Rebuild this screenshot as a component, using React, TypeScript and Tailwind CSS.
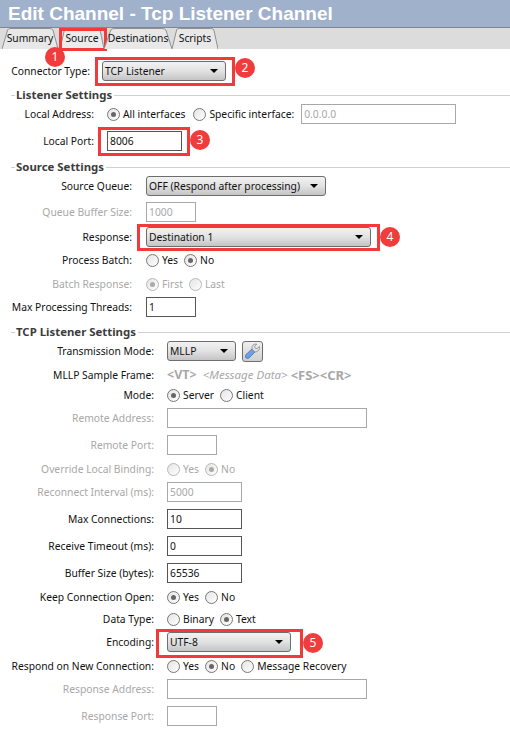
import React from "react";

const redBox = "absolute border-[3px] border-[#f23a3a] pointer-events-none";
const badge =
  "absolute w-5 h-5 rounded-full bg-[#f03c3c] text-white text-[12px] flex items-center justify-center";

// Section heading with the rule running to the right edge
function Heading({ title, className }: { title: string; className: string }) {
  return (
    <div className={`flex items-center h-[14px] ${className}`}>
      <div className="ml-[11px] w-[4px] h-px bg-[#d0d0d0] shrink-0" />
      <span className="font-bold text-[#3c3c3c] text-[11.4px] px-[1px]">{title}</span>
      <div className="flex-1 h-px bg-[#d0d0d0] ml-[1px]" />
    </div>
  );
}

function Row({
  label,
  labelW,
  disabled,
  className,
  children,
}: {
  label: string;
  labelW: string;
  disabled?: boolean;
  className?: string;
  children: React.ReactNode;
}) {
  return (
    <div className={`flex items-center h-5 ${className}`}>
      <div className={`text-right shrink-0 whitespace-nowrap ${labelW} ${disabled ? "text-[#a8a8a8]" : "text-[#111]"}`}>
        {label}
      </div>
      {children}
    </div>
  );
}

function Radio({ label, checked, disabled }: { label: string; checked?: boolean; disabled?: boolean }) {
  return (
    <div className={`flex items-center gap-[3px] mr-[6px] whitespace-nowrap ${disabled ? "text-[#a8a8a8]" : "text-[#111]"}`}>
      <span
        className={`w-[13px] h-[13px] rounded-full border flex items-center justify-center bg-gradient-to-br from-[#e4e4e4] to-white ${
          disabled ? "border-[#b8b8b8]" : "border-[#777]"
        }`}
      >
        {checked && <span className={`w-[5px] h-[5px] rounded-full ${disabled ? "bg-[#aaa]" : "bg-[#666]"}`} />}
      </span>
      {label}
    </div>
  );
}

function Input({ value, width, disabled }: { value?: string; width: string; disabled?: boolean }) {
  return (
    <div
      className={`h-5 border flex items-center px-[2px] ${width} ${
        disabled ? "border-[#a8a8a8] text-[#a8a8a8]" : "border-[#555] text-[#111]"
      }`}
    >
      {value}
    </div>
  );
}

function Select({ value, width }: { value: string; width: string }) {
  return (
    <div
      className={`h-5 border border-[#6e6e6e] rounded-[3px] flex items-center justify-between pl-[2px] pr-[7px] whitespace-nowrap bg-gradient-to-b from-[#f2f2f2] via-[#e2e2e2] to-[#c4c4c4] text-[#111] ${width}`}
    >
      <span>{value}</span>
      <span className="w-0 h-0 border-l-[4px] border-r-[4px] border-t-[4px] border-l-transparent border-r-transparent border-t-black" />
    </div>
  );
}

function Tab({ label, width, active }: { label: string; width: string; active?: boolean }) {
  return (
    <div className={`relative h-[21px] flex items-center justify-center text-[#111] ${width}`}>
      <svg className="absolute inset-0 w-full h-full" viewBox="0 0 50 21" preserveAspectRatio="none">
        <path
          d="M0 21 L5 2 Q5.500 0.500 8 0.500 L42 0.500 Q45 0.500 45.500 2 L50 21"
          fill={active ? "#ececec" : "#e8e8e8"}
          stroke="#8f8f8f"
          strokeWidth="1"
          vectorEffect="non-scaling-stroke"
        />
      </svg>
      <span className="relative">{label}</span>
    </div>
  );
}

export default function App() {
  return (
    <div className="w-[510px] h-[742px] overflow-hidden bg-white text-[10.3px] leading-none font-['Noto_Sans','Liberation_Sans',sans-serif]">
      {/* Title */}
      <div className="h-[28px] bg-[#9fb1cb] border-b border-[#7f8791] pl-[8px] flex items-center text-white font-bold text-[19px] font-['Liberation_Sans',sans-serif]">
        Edit Channel - Tcp Listener Channel
      </div>

      {/* Tabs */}
      <div className="h-[21px] bg-[#dcdcdc] flex items-end pl-[2px]">
        <Tab label="Summary" width="w-[56px]" />
        <div className="relative ml-[2px]">
          <Tab label="Source" width="w-[44px]" active />
          <div className={`${redBox} -left-[1px] -right-[3px] top-0 h-[23px]`} />
          <div className={`${badge} -left-[15px] top-[19px]`}>1</div>
        </div>
        <Tab label="Destinations" width="w-[68px]" />
        <Tab label="Scripts" width="w-[46px]" />
      </div>

      {/* Connector */}
      <Row label="Connector Type:" labelW="w-[90px]" className="mt-[12px]">
        <div className="relative ml-[12px]">
          <Select value="TCP Listener" width="w-[124px]" />
          <div className={`${redBox} -left-[7px] -right-[9px] -top-[4px] -bottom-[5px]`} />
          <div className={`${badge} -right-[29px] -top-[3px]`}>2</div>
        </div>
      </Row>

      {/* Listener Settings */}
      <Heading title="Listener Settings" className="mt-[7px]" />
      <Row label="Local Address:" labelW="w-[94px]" className="mt-[2px]">
        <div className="flex items-center ml-[13px]">
          <Radio label="All interfaces" checked />
          <div className="ml-[2px]">
            <Radio label="Specific interface:" />
          </div>
          <div className="ml-[1px]">
            <Input value="0.0.0.0" width="w-[155px]" disabled />
          </div>
        </div>
      </Row>
      <Row label="Local Port:" labelW="w-[94px]" className="mt-[7px]">
        <div className="relative ml-[13px]">
          <Input value="8006" width="w-[75px]" />
          <div className={`${redBox} -left-[9px] -right-[8px] -top-[4px] -bottom-[5px]`} />
          <div className={`${badge} -right-[28px] -top-[1px]`}>3</div>
        </div>
      </Row>

      {/* Source Settings */}
      <Heading title="Source Settings" className="mt-[9px]" />
      <Row label="Source Queue:" labelW="w-[132px]" className="mt-[2px]">
        <div className="ml-[14px]">
          <Select value="OFF (Respond after processing)" width="w-[180px]" />
        </div>
      </Row>
      <Row label="Queue Buffer Size:" labelW="w-[132px]" disabled className="mt-[6px]">
        <div className="ml-[14px]">
          <Input value="1000" width="w-[50px]" disabled />
        </div>
      </Row>
      <Row label="Response:" labelW="w-[132px]" className="mt-[5px]">
        <div className="relative ml-[14px]">
          <Select value="Destination 1" width="w-[225px]" />
          <div className={`${redBox} -left-[9px] -right-[9px] -top-[3px] -bottom-[4px]`} />
          <div className={`${badge} -right-[29px] top-0`}>4</div>
        </div>
      </Row>
      <Row label="Process Batch:" labelW="w-[132px]" className="mt-[3px]">
        <div className="flex items-center ml-[14px]">
          <Radio label="Yes" />
          <Radio label="No" checked />
        </div>
      </Row>
      <Row label="Batch Response:" labelW="w-[132px]" disabled className="mt-[4px]">
        <div className="flex items-center ml-[14px]">
          <Radio label="First" checked disabled />
          <Radio label="Last" disabled />
        </div>
      </Row>
      <Row label="Max Processing Threads:" labelW="w-[132px]" className="mt-[3px]">
        <div className="ml-[14px]">
          <Input value="1" width="w-[50px]" />
        </div>
      </Row>

      {/* TCP Listener Settings */}
      <Heading title="TCP Listener Settings" className="mt-[8px]" />
      <Row label="Transmission Mode:" labelW="w-[154px]" className="mt-[2px]">
        <div className="flex items-center ml-[13px] gap-[6px]">
          <Select value="MLLP" width="w-[69px]" />
          <div className="w-[21px] h-[21px] border border-[#6e6e6e] rounded-[3px] bg-gradient-to-b from-[#f0f0f0] to-[#cfcfcf] flex items-center justify-center">
            <svg width="17" height="17" viewBox="0 0 17 17">
              <path d="M2 11.500 L8 6 L11 9 L5 15 Q3 16 1.800 14.800 Q0.800 13.400 2 11.500 Z" fill="#6f9fe2" stroke="#3f66a8" strokeWidth="0.7" />
              <path
                d="M8 6 Q7.400 3 9.500 1.600 Q11 0.800 12.800 1.200 L10.600 3.400 L11.200 5.200 L13 5.800 L15.400 3.400 Q16 5.400 14.800 7.200 Q13.200 9 11 9 Z"
                fill="#e2e2e2"
                stroke="#808080"
                strokeWidth="0.7"
              />
            </svg>
          </div>
        </div>
      </Row>
      <Row label="MLLP Sample Frame:" labelW="w-[154px]" className="mt-[4px]">
        <div className="ml-[13px] flex items-center text-[#a8a8a8] whitespace-nowrap">
          <span className="font-bold text-[12.5px]">{"<VT>"}</span>
          <span className="italic text-[11.5px] ml-[6px]">{"<Message Data>"}</span>
          <span className="font-bold text-[13px] ml-[3px]">{"<FS><CR>"}</span>
        </div>
      </Row>
      <Row label="Mode:" labelW="w-[154px]">
        <div className="flex items-center ml-[13px]">
          <Radio label="Server" checked />
          <Radio label="Client" />
        </div>
      </Row>
      <Row label="Remote Address:" labelW="w-[154px]" disabled className="mt-[3px]">
        <div className="ml-[13px]">
          <Input width="w-[200px]" disabled />
        </div>
      </Row>
      <Row label="Remote Port:" labelW="w-[154px]" disabled className="mt-[7px]">
        <div className="ml-[13px]">
          <Input width="w-[50px]" disabled />
        </div>
      </Row>
      <Row label="Override Local Binding:" labelW="w-[154px]" disabled className="mt-[4px]">
        <div className="flex items-center ml-[13px]">
          <Radio label="Yes" disabled />
          <Radio label="No" checked disabled />
        </div>
      </Row>
      <Row label="Reconnect Interval (ms):" labelW="w-[154px]" disabled className="mt-[3px]">
        <div className="ml-[13px]">
          <Input value="5000" width="w-[75px]" disabled />
        </div>
      </Row>
      <Row label="Max Connections:" labelW="w-[154px]" className="mt-[7px]">
        <div className="ml-[13px]">
          <Input value="10" width="w-[75px]" />
        </div>
      </Row>
      <Row label="Receive Timeout (ms):" labelW="w-[154px]" className="mt-[7px]">
        <div className="ml-[13px]">
          <Input value="0" width="w-[75px]" />
        </div>
      </Row>
      <Row label="Buffer Size (bytes):" labelW="w-[154px]" className="mt-[7px]">
        <div className="ml-[13px]">
          <Input value="65536" width="w-[75px]" />
        </div>
      </Row>
      <Row label="Keep Connection Open:" labelW="w-[154px]" className="mt-[4px]">
        <div className="flex items-center ml-[13px]">
          <Radio label="Yes" checked />
          <Radio label="No" />
        </div>
      </Row>
      <Row label="Data Type:" labelW="w-[154px]" className="mt-[2px]">
        <div className="flex items-center ml-[13px]">
          <Radio label="Binary" />
          <Radio label="Text" checked />
        </div>
      </Row>
      <Row label="Encoding:" labelW="w-[154px]" className="mt-[3px]">
        <div className="relative ml-[13px]">
          <Select value="UTF-8" width="w-[124px]" />
          <div className={`${redBox} -left-[11px] -right-[12px] -top-[3px] -bottom-[6px]`} />
          <div className={`${badge} -right-[32px] top-[1px]`}>5</div>
        </div>
      </Row>
      <Row label="Respond on New Connection:" labelW="w-[154px]" className="mt-[4px]">
        <div className="flex items-center ml-[13px]">
          <Radio label="Yes" />
          <Radio label="No" checked />
          <Radio label="Message Recovery" />
        </div>
      </Row>
      <Row label="Response Address:" labelW="w-[154px]" disabled className="mt-[3px]">
        <div className="ml-[13px]">
          <Input width="w-[200px]" disabled />
        </div>
      </Row>
      <Row label="Response Port:" labelW="w-[154px]" disabled className="mt-[7px]">
        <div className="ml-[13px]">
          <Input width="w-[50px]" disabled />
        </div>
      </Row>
    </div>
  );
}
